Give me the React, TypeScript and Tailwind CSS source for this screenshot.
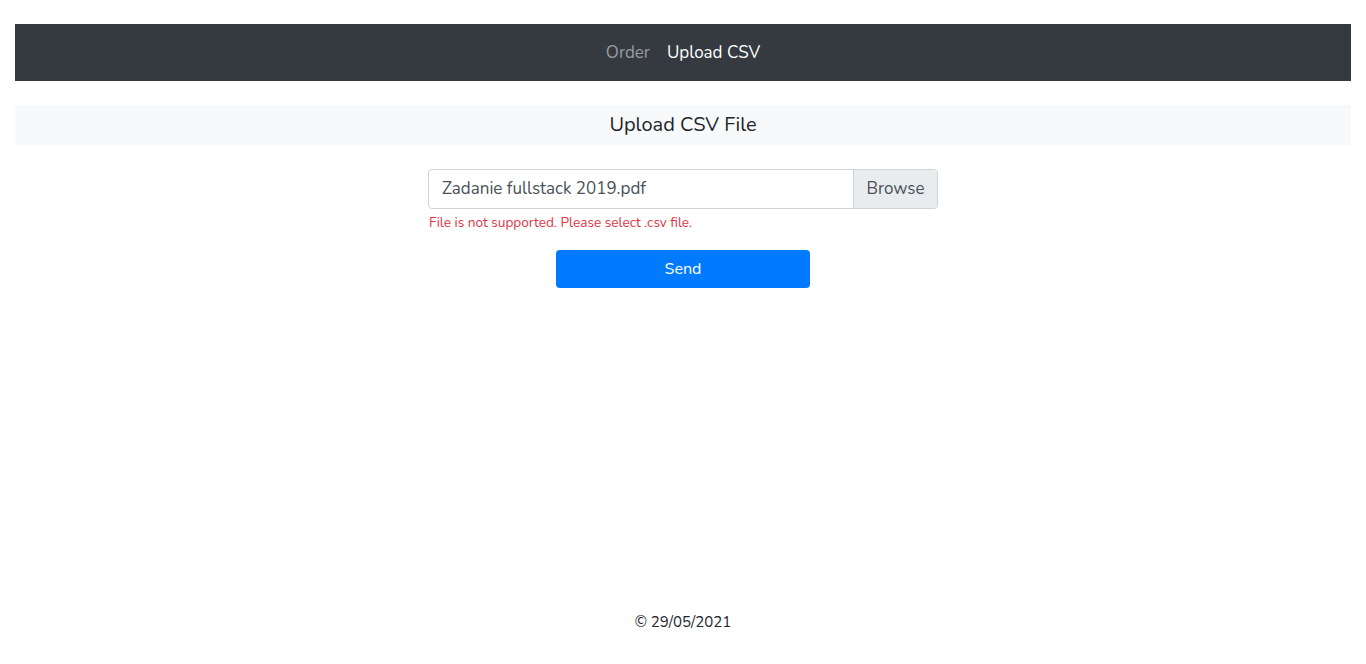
import React from "react";

export default function App() {
  return (
    <div
      className="min-h-[664px] flex flex-col bg-white text-[#212529]"
      style={{ fontFamily: '"Nunito", "Noto Sans", "Open Sans", sans-serif' }}
    >
      <div className="px-[15px] pt-[24px]">
        <nav className="h-[57px] bg-[#343a40] flex items-center justify-center gap-[17px] text-[17px]">
          <span className="text-[#9a9da0]">Order</span>
          <span className="text-white">Upload CSV</span>
        </nav>
        <div className="mt-[24px] h-[40px] bg-[#f8f9fa] flex items-center justify-center text-[20px] text-[#212529]">
          Upload CSV File
        </div>
        <div className="mt-[24px] flex flex-col items-center">
          <div className="w-[510px]">
            <div className="h-[40px] flex border border-[#ced4da] rounded-[4px] overflow-hidden text-[17px]">
              <div className="flex-1 flex items-center px-[13px] text-[#495057]">Zadanie fullstack 2019.pdf</div>
              <div className="w-[84px] flex items-center justify-center bg-[#e9ecef] border-l border-[#ced4da] text-[#495057]">
                Browse
              </div>
            </div>
            <div className="mt-[5px] pl-[1px] text-[13.6px] text-[#dc3545] leading-[18px]">
              File is not supported. Please select .csv file.
            </div>
          </div>
          <button className="mt-[18px] w-[254px] h-[38px] bg-[#007bff] rounded-[4px] text-white text-[16px]">
            Send
          </button>
        </div>
      </div>
      <div className="flex-1" />
      <div className="h-[54px] flex justify-center pt-[1px] text-[15px] text-[#212529]">© 29/05/2021</div>
    </div>
  );
}
